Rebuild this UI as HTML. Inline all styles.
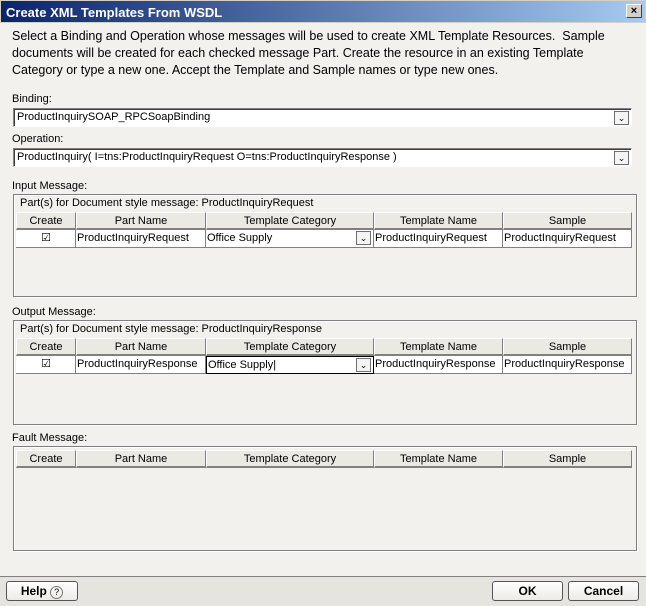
<!DOCTYPE html><html><head><style>
*{box-sizing:border-box;margin:0;padding:0}
body{width:646px;height:606px;position:relative;background:#f2f1ee;font-family:"Liberation Sans",sans-serif;font-size:11px;color:#000;overflow:hidden}
.a{position:absolute}
.title{left:0;top:0;width:646px;height:23px;background:linear-gradient(90deg,#0a246a,#a6caf0);color:#fff;font-weight:bold;font-size:13px;padding:4px 0 0 5px;border:1px solid #d4d0c8}
.x{right:4px;top:4px;width:16px;height:14px;background:#d4d0c8;border:1px solid;border-color:#fff #404040 #404040 #fff;color:#000;font-size:11px;text-align:center;line-height:12px;font-weight:bold}
.p{left:12px;top:28px;font-size:12.5px;line-height:17px;width:600px}
.combo{background:#fff;border:1px solid;border-color:#808080 #fff #fff #808080;box-shadow:inset 1px 1px 0 #404040;height:19px;padding:2px 3px;white-space:nowrap}
.dd{position:absolute;right:2px;top:2px;width:15px;height:14px;border:1px solid #707070;background:#f4f4f4;font-size:9px;text-align:center;line-height:12px}
.grp{border:1px solid #808080;box-shadow:1px 1px 0 #fff inset,1px 1px 0 #fff}
.cell{position:absolute;height:18px;text-align:center;line-height:16px;background:#ebe9e4;border:1px solid;border-color:#fff #808080 #808080 #fff;border-bottom:2px solid #808080}
.d{position:absolute;height:18px;line-height:16px;background:#fff;border-right:1px solid #808080;border-bottom:1px solid #808080;white-space:nowrap;overflow:hidden;padding-left:1px}
.btn{position:absolute;top:581px;height:20px;border:1px solid #555;border-radius:3px;background:linear-gradient(#fff,#ecebe6);font-weight:bold;font-size:12px;text-align:center;line-height:18px}
</style></head><body>
<div class="a title">Create XML Templates From WSDL</div><div class="a x">×</div>
<div class="a p">Select a Binding and Operation whose messages will be used to create XML Template Resources.&nbsp; Sample documents will be created for each checked message Part. Create the resource in an existing Template Category or type a new one. Accept the Template and Sample names or type new ones.</div>
<div class="a" style="left:12px;top:93px">Binding:</div>
<div class="a combo" style="left:13px;top:108px;width:619px">ProductInquirySOAP_RPCSoapBinding<div class="dd">⌄</div></div>
<div class="a" style="left:12px;top:133px">Operation:</div>
<div class="a combo" style="left:13px;top:148px;width:619px">ProductInquiry( I=tns:ProductInquiryRequest O=tns:ProductInquiryResponse )<div class="dd">⌄</div></div>

<div class="a" style="left:12px;top:180px">Input Message:</div>
<div class="a grp" style="left:13px;top:194px;width:624px;height:103px"></div>
<div class="a" style="left:20px;top:197px">Part(s) for Document style message: ProductInquiryRequest</div>
<div class="cell" style="left:16px;top:212px;width:60px">Create</div><div class="cell" style="left:76px;top:212px;width:130px">Part Name</div><div class="cell" style="left:206px;top:212px;width:168px">Template Category</div><div class="cell" style="left:374px;top:212px;width:129px">Template Name</div><div class="cell" style="left:503px;top:212px;width:129px">Sample</div>
<div class="d" style="left:16px;top:230px;width:60px;text-align:center">☑</div><div class="d" style="left:76px;top:230px;width:130px">ProductInquiryRequest</div><div class="d" style="left:206px;top:230px;width:168px">Office Supply<div class="dd" style="top:1px">⌄</div></div><div class="d" style="left:374px;top:230px;width:129px">ProductInquiryRequest</div><div class="d" style="left:503px;top:230px;width:129px">ProductInquiryRequest</div>

<div class="a" style="left:12px;top:306px">Output Message:</div>
<div class="a grp" style="left:13px;top:320px;width:624px;height:105px"></div>
<div class="a" style="left:20px;top:323px">Part(s) for Document style message: ProductInquiryResponse</div>
<div class="cell" style="left:16px;top:338px;width:60px">Create</div><div class="cell" style="left:76px;top:338px;width:130px">Part Name</div><div class="cell" style="left:206px;top:338px;width:168px">Template Category</div><div class="cell" style="left:374px;top:338px;width:129px">Template Name</div><div class="cell" style="left:503px;top:338px;width:129px">Sample</div>
<div class="d" style="left:16px;top:356px;width:60px;text-align:center">☑</div><div class="d" style="left:76px;top:356px;width:130px">ProductInquiryResponse</div><div class="d" style="left:206px;top:356px;width:168px;border:1px solid #000">Office Supply|<div class="dd" style="top:1px">⌄</div></div><div class="d" style="left:374px;top:356px;width:129px">ProductInquiryResponse</div><div class="d" style="left:503px;top:356px;width:129px">ProductInquiryResponse</div>

<div class="a" style="left:12px;top:432px">Fault Message:</div>
<div class="a grp" style="left:13px;top:446px;width:624px;height:105px"></div>
<div class="cell" style="left:16px;top:450px;width:60px">Create</div><div class="cell" style="left:76px;top:450px;width:130px">Part Name</div><div class="cell" style="left:206px;top:450px;width:168px">Template Category</div><div class="cell" style="left:374px;top:450px;width:129px">Template Name</div><div class="cell" style="left:503px;top:450px;width:129px">Sample</div>

<div class="a" style="left:0;top:576px;width:646px;height:30px;background:#e6e4df;border-top:1px solid #808080"></div>
<div class="btn" style="left:6px;width:72px">Help <span style="font-weight:normal;border:1px solid #777;border-radius:50%;display:inline-block;width:13px;height:13px;line-height:11px;font-size:9px">?</span></div>
<div class="btn" style="left:492px;width:71px">OK</div>
<div class="btn" style="left:568px;width:71px">Cancel</div>
</body></html>
